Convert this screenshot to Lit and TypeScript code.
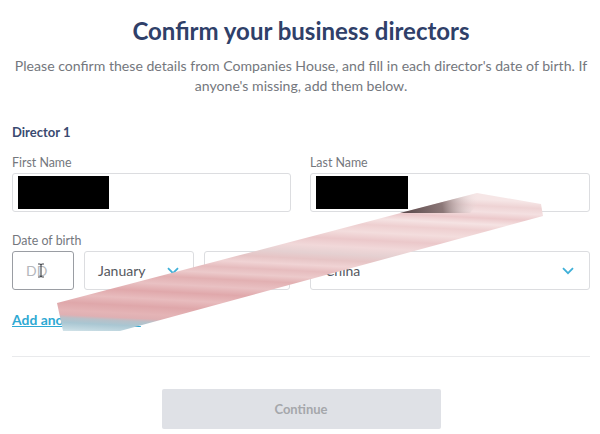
import { LitElement, html, css, svg } from "lit";
import { customElement } from "lit/decorators.js";

const chevron = html`<svg class="chev" width="12" height="8" viewBox="0 0 12 8" fill="none"><path d="M1 1.2 6 6.2 11 1.2" stroke="#3fb0d8" stroke-width="1.8"/></svg>`;

const stripes: [number, string][] = [
  [0, "#f6e6e6"], [0.04, "#eed3d4"], [0.08, "#f4e0e1"], [0.12, "#ecc9cb"], [0.16, "#f5e3e3"],
  [0.2, "#eecfd0"], [0.25, "#f3dddd"], [0.3, "#ebc8ca"], [0.35, "#f1d8d9"], [0.4, "#e5d0d1"],
  [0.44, "#e6c4c5"], [0.48, "#f0d3d4"], [0.52, "#e6bcbe"], [0.56, "#eccacb"], [0.6, "#e2b0b2"],
  [0.65, "#e9c1c3"], [0.7, "#e0a8ab"], [0.75, "#e8bcbe"], [0.8, "#dfa7aa"], [0.85, "#e4b4b6"],
  [0.88, "#dfb0b3"], [0.9, "#b9c0c8"], [0.93, "#a9c6d2"], [0.97, "#c3d9e1"], [1, "#e3edf0"],
];

@customElement("app-root")
export class AppRoot extends LitElement {
  static styles = css`
    :host {
      display: block;
      position: relative;
      height: 434px;
      overflow: hidden;
      background: #fff;
      font-family: Lato, "Noto Sans", sans-serif;
      color: #63666d;
    }
    .page { padding: 15px 10px 0 12px; }
    h1 {
      margin: 0;
      text-align: center;
      font-size: 24px;
      line-height: 32px;
      font-weight: 700;
      color: #2f4069;
    }
    .intro {
      margin: 9px 0 0;
      text-align: center;
      font-size: 14.1px;
      line-height: 20px;
      color: #74777d;
    }
    h2 {
      margin: 26px 0 0;
      font-size: 13px;
      line-height: 20px;
      font-weight: 700;
      color: #3a4a70;
    }
    .grid {
      display: grid;
      grid-template-columns: 279px 280px;
      column-gap: 19px;
      row-gap: 18px;
      margin-top: 10px;
    }
    label {
      display: block;
      height: 21px;
      padding-top: 1px;
      box-sizing: border-box;
      font-size: 12.4px;
      line-height: 20px;
      color: #74777d;
    }
    .box {
      box-sizing: border-box;
      height: 39px;
      display: flex;
      align-items: center;
      justify-content: space-between;
      border: 1px solid #dcdde0;
      border-radius: 3px;
      background: #fff;
      font-size: 14px;
      color: #55585e;
    }
    .name { padding: 2px 5px; }
    .redact { width: 91px; height: 33px; background: #000; }
    .redact.wide { width: 92px; }
    .row { display: flex; gap: 10px; }
    .dd {
      position: relative;
      width: 62px;
      padding-left: 13px;
      border-color: #9a9da3;
      color: #b5b7bb;
      justify-content: flex-start;
    }
    .cursor { position: absolute; left: 23px; top: 11px; }
    .month { width: 110px; padding: 0 14px 0 13px; }
    .year { width: 86px; }
    .country { padding: 0 15px 0 14px; }
    .add {
      display: block;
      margin-top: 21px;
      font-size: 13.9px;
      line-height: 18px;
      font-weight: 700;
      color: #2fa9d3;
      text-decoration: underline;
    }
    hr {
      margin: 27px 0 0;
      border: 0;
      border-top: 1px solid #e9eaec;
    }
    .actions { display: flex; justify-content: center; margin-top: 32px; }
    .continue {
      width: 279px;
      height: 40px;
      border: 0;
      border-radius: 2px;
      background: #dfe1e6;
      color: #a5a7ab;
      font: 700 13px Lato, "Noto Sans", sans-serif;
    }
    .smear { position: absolute; left: 0; top: 0; pointer-events: none; }
  `;

  render() {
    return html`
      <div class="page">
        <h1>Confirm your business directors</h1>
        <p class="intro">Please confirm these details from Companies House, and fill in each director's date of birth. If anyone's missing, add them below.</p>
        <h2>Director 1</h2>
        <div class="grid">
          <div>
            <label>First Name</label>
            <div class="box name"><div class="redact"></div></div>
          </div>
          <div>
            <label>Last Name</label>
            <div class="box name"><div class="redact wide"></div></div>
          </div>
          <div>
            <label>Date of birth</label>
            <div class="row">
              <div class="box dd">DD
                <svg class="cursor" width="10" height="15" viewBox="0 0 10 15" fill="none"><path d="M2 1h2l1 1 1-1h2M5 2v11M2 14h2l1-1 1 1h2" stroke="#4a4d52" stroke-width="1.2"/></svg>
              </div>
              <div class="box month">January ${chevron}</div>
              <div class="box year"></div>
            </div>
          </div>
          <div>
            <label>&nbsp;</label>
            <div class="box country">China ${chevron}</div>
          </div>
        </div>
        <a class="add">Add another director</a>
        <hr />
        <div class="actions"><button class="continue">Continue</button></div>
      </div>
      <svg class="smear" width="600" height="434" viewBox="0 0 600 434">
        <defs>
          <linearGradient id="band" gradientUnits="userSpaceOnUse" x1="300" y1="190" x2="292" y2="345">
            ${stripes.map(([o, c]) => svg`<stop offset=${o} stop-color=${c} />`)}
          </linearGradient>
          <linearGradient id="dark" gradientUnits="userSpaceOnUse" x1="405" y1="210" x2="478" y2="196">
            <stop offset="0" stop-color="#5d4b4d" />
            <stop offset="0.5" stop-color="#8c7878" />
            <stop offset="1" stop-color="#f0e4e4" stop-opacity="0" />
          </linearGradient>
        </defs>
        <polygon points="477,193 541,204 543,216 120,331 63,331 57,303" fill="url(#band)" />
        <polygon points="400,213 477,193 484,197 470,213" fill="url(#dark)" />
      </svg>
    `;
  }
}
